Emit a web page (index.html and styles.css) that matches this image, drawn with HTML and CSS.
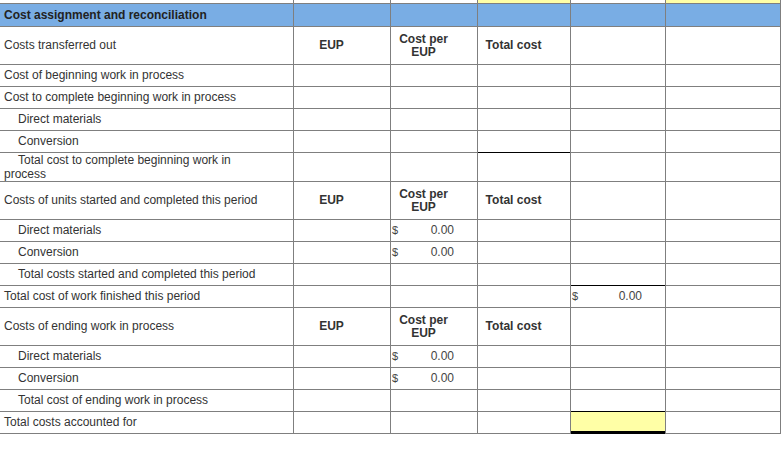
FILE: index.html
```html
<!DOCTYPE html>
<html>
<head>
<meta charset="utf-8">
<link rel="stylesheet" href="styles.css">
</head>
<body>
<div class="sheet">
  <div class="c"></div><div class="c"></div><div class="c"></div><div class="c yel"></div><div class="c"></div><div class="c yel"></div>

  <div class="c hdr title">Cost assignment and reconciliation</div><div class="c hdr"></div><div class="c hdr"></div><div class="c hdr"></div><div class="c hdr"></div><div class="c hdr"></div>

  <div class="c lbl">Costs transferred out</div><div class="c ch">EUP</div><div class="c ch">Cost per<br>EUP</div><div class="c ch">Total cost</div><div class="c"></div><div class="c"></div>

  <div class="c lbl">Cost of beginning work in process</div><div class="c"></div><div class="c"></div><div class="c"></div><div class="c"></div><div class="c"></div>

  <div class="c lbl">Cost to complete beginning work in process</div><div class="c"></div><div class="c"></div><div class="c"></div><div class="c"></div><div class="c"></div>

  <div class="c lbl ind">Direct materials</div><div class="c"></div><div class="c"></div><div class="c"></div><div class="c"></div><div class="c"></div>

  <div class="c lbl ind">Conversion</div><div class="c"></div><div class="c"></div><div class="c under"></div><div class="c"></div><div class="c"></div>

  <div class="c lbl ind wrap">Total cost to complete beginning work in process</div><div class="c"></div><div class="c"></div><div class="c"></div><div class="c"></div><div class="c"></div>

  <div class="c lbl">Costs of units started and completed this period</div><div class="c ch">EUP</div><div class="c ch">Cost per<br>EUP</div><div class="c ch">Total cost</div><div class="c"></div><div class="c"></div>

  <div class="c lbl ind">Direct materials</div><div class="c"></div><div class="c num"><span class="cur">$</span><span class="amt">0.00</span></div><div class="c"></div><div class="c"></div><div class="c"></div>

  <div class="c lbl ind">Conversion</div><div class="c"></div><div class="c num"><span class="cur">$</span><span class="amt">0.00</span></div><div class="c"></div><div class="c"></div><div class="c"></div>

  <div class="c lbl ind">Total costs started and completed this period</div><div class="c"></div><div class="c"></div><div class="c"></div><div class="c under"></div><div class="c"></div>

  <div class="c lbl">Total cost of work finished this period</div><div class="c"></div><div class="c"></div><div class="c"></div><div class="c num"><span class="cur">$</span><span class="amt">0.00</span></div><div class="c"></div>

  <div class="c lbl">Costs of ending work in process</div><div class="c ch">EUP</div><div class="c ch">Cost per<br>EUP</div><div class="c ch">Total cost</div><div class="c"></div><div class="c"></div>

  <div class="c lbl ind">Direct materials</div><div class="c"></div><div class="c num"><span class="cur">$</span><span class="amt">0.00</span></div><div class="c"></div><div class="c"></div><div class="c"></div>

  <div class="c lbl ind">Conversion</div><div class="c"></div><div class="c num"><span class="cur">$</span><span class="amt">0.00</span></div><div class="c"></div><div class="c"></div><div class="c"></div>

  <div class="c lbl ind">Total cost of ending work in process</div><div class="c"></div><div class="c"></div><div class="c"></div><div class="c"></div><div class="c"></div>

  <div class="c lbl">Total costs accounted for</div><div class="c"></div><div class="c"></div><div class="c"></div><div class="c yel total"></div><div class="c"></div>
</div>
</body>
</html>
```

FILE: styles.css
```css
html, body {
  margin: 0;
  padding: 0;
  background: #fff;
}

body {
  font-family: "Liberation Sans", Arial, sans-serif;
  font-size: 12px;
  color: #333;
}

.sheet {
  display: grid;
  grid-template-columns: 293px 96px 86px 92px 94px 114px;
  grid-template-rows: 3px 22px 37px 21px 21px 21px 21px 28px 37px 21px 21px 21px 21px 37px 21px 21px 21px 21px;
  gap: 1px;
  padding: 1px;
  background: #7f7f7f;
  margin: -1px 0 0 -1px;
  width: max-content;
}

.c {
  background: #fff;
  display: flex;
  align-items: center;
  min-width: 0;
  overflow: visible;
}

.yel {
  background: #ffffa6;
}

.hdr {
  background: #79ade4;
}

.title {
  font-weight: bold;
  color: #222;
  padding-left: 4px;
}

.lbl {
  padding-left: 4px;
  padding-right: 24px;
  padding-bottom: 2px;
}

.ind {
  padding-left: 18px;
}

.wrap {
  display: block;
  padding-left: 4px;
  padding-top: 0;
  padding-bottom: 0;
  text-indent: 14px;
  line-height: 14px;
}

.ch {
  justify-content: center;
  text-align: center;
  font-weight: bold;
  line-height: 13px;
  padding-right: 21px;
}

.num {
  justify-content: space-between;
  color: #444;
  padding-bottom: 2px;
}

.cur {
  padding-left: 1px;
  font-size: 11px;
}

.amt {
  padding-right: 23px;
}

.under {
  box-shadow: 0 1px 0 #000;
}

.total {
  box-shadow: 0 -1px 0 #000, 0 1px 0 #000, inset 0 -2px 0 #000;
}
```
